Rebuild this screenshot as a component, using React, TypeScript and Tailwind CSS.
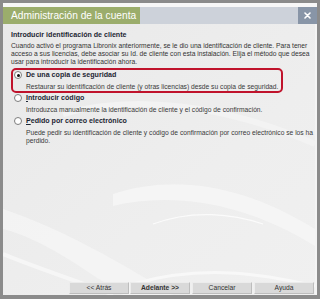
import React from 'react';

const font = { fontFamily: '"Liberation Sans", Arial, sans-serif' };

type OptionProps = {
  label: React.ReactNode;
  lines: string[];
  checked?: boolean;
  highlight?: boolean;
  className?: string;
};

const Radio: React.FC<{ checked?: boolean }> = ({ checked }) => (
  <span className="flex h-[8px] w-[8px] shrink-0 items-center justify-center rounded-full border border-[#7d7d7d] bg-white">
    {checked && <span className="h-[3px] w-[3px] rounded-full bg-[#111]" />}
  </span>
);

const Option: React.FC<OptionProps> = ({ label, lines, checked, highlight, className = '' }) => (
  <div
    className={`rounded-[5px] border-2 pl-px ${highlight ? 'w-[272px] border-[#c0132c]' : 'border-transparent'} ${className}`}
  >
    <div className="flex h-[10px] items-center gap-[4px]">
      <Radio checked={checked} />
      <span className="text-[7.1px] font-bold leading-[10px] text-[#1d2633]">{label}</span>
    </div>
    <div className="mt-[3px] pl-[12px] text-[6.7px] leading-[8px] text-[#3a3a3a]">
      {lines.map((l) => (
        <div key={l} className="whitespace-nowrap">{l}</div>
      ))}
    </div>
  </div>
);

const Button: React.FC<{ children: React.ReactNode; bold?: boolean }> = ({ children, bold }) => (
  <button
    className={`flex h-[12px] w-[60px] items-center justify-center border-t border-l border-[#ececec] border-b border-r border-b-[#bdbdbd] border-r-[#bdbdbd] bg-[#d9d9d9] text-[6.7px] leading-none text-[#333] ${bold ? 'font-bold' : ''}`}
  >
    {children}
  </button>
);

export default function App() {
  return (
    <div style={font} className="flex h-[299px] w-[320px] flex-col bg-[#8b8b8b] px-[3px] pt-[3px] pb-[4px]">
      {/* top white strip */}
      <div className="h-[4px] bg-[#f7f7f7]" />

      {/* title bar */}
      <div className="flex h-[17px]">
        <div className="flex w-[137px] items-center bg-[#9bad6c] pl-[8px] text-[10.2px] text-white">
          Administración de la cuenta
        </div>
        <div className="flex-1 bg-[#cdd2da]" />
        <div className="flex w-[19px] items-center justify-center bg-[#8895a7]">
          <svg width="7" height="7" viewBox="0 0 7 7">
            <path d="M1 1 L6 6 M6 1 L1 6" stroke="#fff" strokeWidth="1.6" strokeLinecap="round" />
          </svg>
        </div>
      </div>

      {/* body */}
      <div className="relative flex flex-1 flex-col overflow-hidden border-r-2 border-[#f4f4f4] bg-[#ebebeb]">
        <svg className="pointer-events-none absolute inset-0 h-full w-full" viewBox="0 0 312 271" preserveAspectRatio="none">
          <defs>
            <linearGradient id="bg" x1="0" y1="0" x2="1" y2="1">
              <stop offset="0%" stopColor="#e9e9e9" />
              <stop offset="60%" stopColor="#eeeeee" />
              <stop offset="100%" stopColor="#f0f0f0" />
            </linearGradient>
          </defs>
          <rect width="312" height="271" fill="url(#bg)" />
          <path d="M0 185 C60 205 120 240 170 271 L120 271 C80 245 40 215 0 205 Z" fill="#f4f4f4" opacity="0.9" />
          <path d="M110 170 C170 150 240 160 312 205 L312 222 C240 178 170 168 110 182 Z" fill="#f5f5f5" opacity="0.9" />
          <path d="M150 200 C190 185 230 190 260 200" stroke="#fbfbfb" strokeWidth="1.2" fill="none" />
          <path d="M60 90 C130 70 220 80 312 120" stroke="#f3f3f3" strokeWidth="6" fill="none" />
          <path d="M130 260 C200 240 260 250 312 262" stroke="#f8f8f8" strokeWidth="3" fill="none" />
          <path d="M0 230 C50 250 90 262 110 271" stroke="#f6f6f6" strokeWidth="4" fill="none" />
        </svg>

        <div className="relative flex flex-1 flex-col">
          <div className="pl-[8px] pt-[7px]">
            <div className="text-[7.1px] font-bold leading-[8px] text-[#1d2633]">
              Introducir identificación de cliente
            </div>
            <div className="mt-[3px] text-[6.7px] leading-[8px] text-[#333]">
              <div className="whitespace-nowrap">
                Cuando activó el programa Libronix anteriormente, se le dio una identificación de cliente. Para tener
              </div>
              <div className="whitespace-nowrap">
                acceso a sus licencias, debe asociar su Id. de cliente con esta instalación. Elija el método que desea
              </div>
              <div className="whitespace-nowrap">usar para introducir la identificación ahora.</div>
            </div>

            <div className="mt-[2px] flex flex-col">
              <Option
                checked
                highlight
                label="De una copia de seguridad"
                lines={['Restaurar su identificación de cliente (y otras licencias) desde su copia de seguridad.']}
              />
              <Option
                label={
                  <>
                    <span className="underline">I</span>ntroducir código
                  </>
                }
                lines={['Introduzca manualmente la identificación de cliente y el código de confirmación.']}
                className="-mt-[2px]"
              />
              <Option
                label={
                  <>
                    <span className="underline">P</span>edido por correo electrónico
                  </>
                }
                lines={[
                  'Puede pedir su identificación de cliente y código de confirmación por correo electrónico se los ha',
                  'perdido.',
                ]}
                className="-mt-[2px]"
              />
            </div>
          </div>

          <div className="mt-auto flex justify-end gap-[2px] pb-[1px] pr-[1px]">
            <div className="flex gap-px">
              <Button>&lt;&lt; Atrás</Button>
              <Button bold>Adelante &gt;&gt;</Button>
            </div>
            <Button>Cancelar</Button>
            <Button>Ayuda</Button>
          </div>
        </div>
      </div>
    </div>
  );
}
